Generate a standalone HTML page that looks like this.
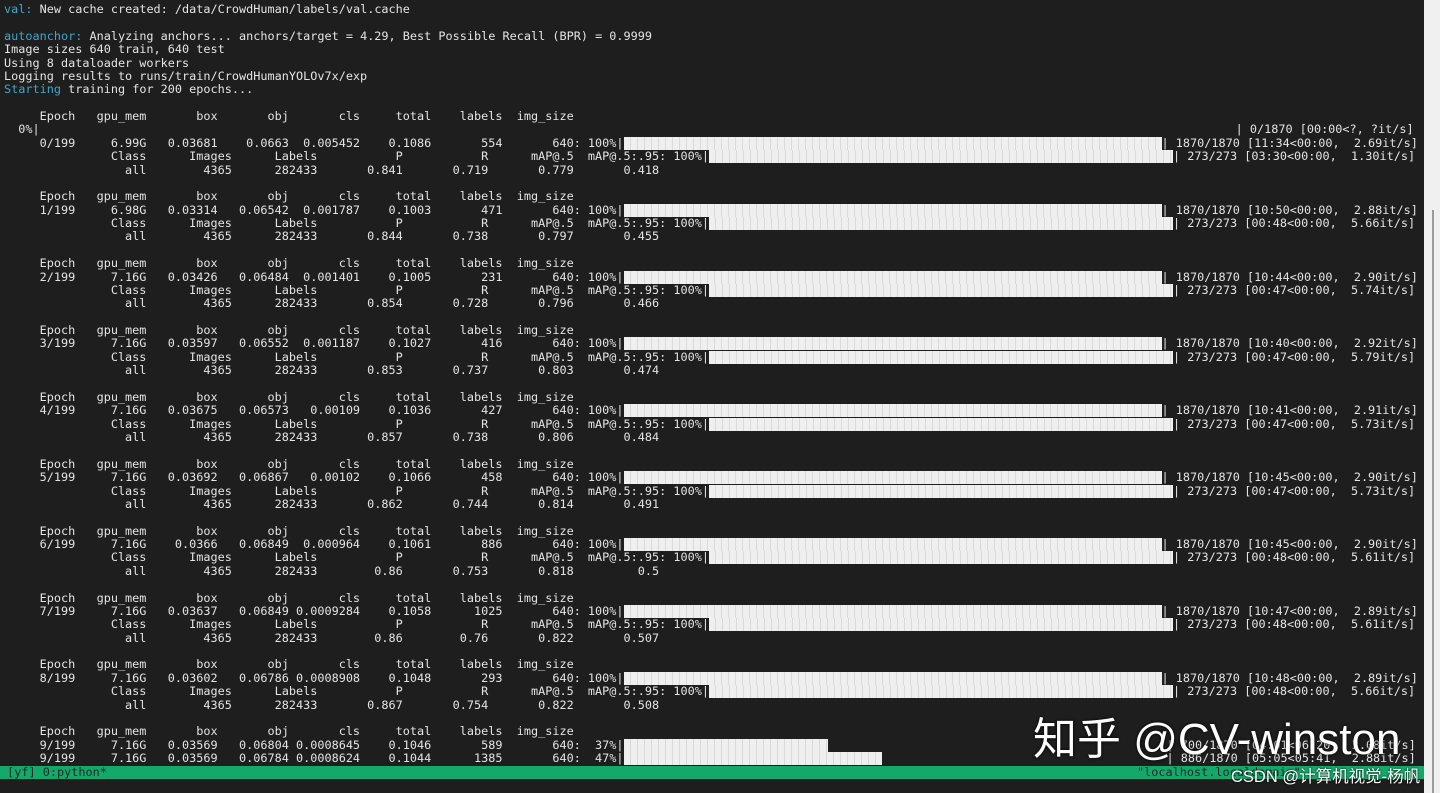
<!DOCTYPE html>
<html><head><meta charset="utf-8"><style>
html,body{margin:0;padding:0;width:1440px;height:793px;overflow:hidden;background:#1e1e1e;}
pre{position:absolute;left:4px;top:3px;margin:0;font-family:"DejaVu Sans Mono","Liberation Mono",monospace;font-size:11.83px;line-height:13.37px;color:#e4e4e4;white-space:pre;}
.c{color:#3ea6cc}
.b,.v,.p,.s{display:inline-block;height:13px;vertical-align:top;}
.b,.v,.p{background:#efefef repeating-linear-gradient(90deg,#efefef 0,#efefef 6px,#dadada 6px,#dadada 7px);}
.b{width:538px}.v{width:464px}
.sb{position:absolute;left:1424px;top:0;width:16px;height:793px;background:#f0f0f0;}
.th{position:absolute;left:1432px;top:210px;width:2px;height:583px;background:#9a9a9a;}
.st{position:absolute;left:0;top:766px;width:1424px;height:13px;background:#14a96b;font-family:"DejaVu Sans Mono","Liberation Mono",monospace;font-size:11.83px;line-height:13px;color:#1e2a22;white-space:pre;}
.wm{position:absolute;left:1033px;top:703px;font-family:"Liberation Sans","Noto Sans CJK SC",sans-serif;font-size:44px;color:#fff;text-shadow:0 0 3px #000;white-space:nowrap;}
.cs{position:absolute;left:1231px;top:763px;font-family:"Liberation Sans","Noto Sans CJK SC",sans-serif;font-size:16.5px;color:#fff;text-shadow:0 0 2px #000;white-space:nowrap;}
</style></head><body>
<pre><span class="c">val:</span> New cache created: /data/CrowdHuman/labels/val.cache

<span class="c">autoanchor:</span> Analyzing anchors... anchors/target = 4.29, Best Possible Recall (BPR) = 0.9999
Image sizes 640 train, 640 test
Using 8 dataloader workers
Logging results to runs/train/CrowdHumanYOLOv7x/exp
<span class="c">Starting</span> training for 200 epochs...

     Epoch   gpu_mem       box       obj       cls     total    labels  img_size
  0%|<span class="s" style="width:1196px"></span>| 0/1870 [00:00&lt;?, ?it/s]
     0/199     6.99G   0.03681    0.0663  0.005452    0.1086       554       640: 100%|<span class="b"></span>| 1870/1870 [11:34&lt;00:00,  2.69it/s]
               Class      Images      Labels           P           R      mAP@.5  mAP@.5:.95: 100%|<span class="v"></span>| 273/273 [03:30&lt;00:00,  1.30it/s]
                 all        4365      282433       0.841       0.719       0.779       0.418

     Epoch   gpu_mem       box       obj       cls     total    labels  img_size
     1/199     6.98G   0.03314   0.06542  0.001787    0.1003       471       640: 100%|<span class="b"></span>| 1870/1870 [10:50&lt;00:00,  2.88it/s]
               Class      Images      Labels           P           R      mAP@.5  mAP@.5:.95: 100%|<span class="v"></span>| 273/273 [00:48&lt;00:00,  5.66it/s]
                 all        4365      282433       0.844       0.738       0.797       0.455

     Epoch   gpu_mem       box       obj       cls     total    labels  img_size
     2/199     7.16G   0.03426   0.06484  0.001401    0.1005       231       640: 100%|<span class="b"></span>| 1870/1870 [10:44&lt;00:00,  2.90it/s]
               Class      Images      Labels           P           R      mAP@.5  mAP@.5:.95: 100%|<span class="v"></span>| 273/273 [00:47&lt;00:00,  5.74it/s]
                 all        4365      282433       0.854       0.728       0.796       0.466

     Epoch   gpu_mem       box       obj       cls     total    labels  img_size
     3/199     7.16G   0.03597   0.06552  0.001187    0.1027       416       640: 100%|<span class="b"></span>| 1870/1870 [10:40&lt;00:00,  2.92it/s]
               Class      Images      Labels           P           R      mAP@.5  mAP@.5:.95: 100%|<span class="v"></span>| 273/273 [00:47&lt;00:00,  5.79it/s]
                 all        4365      282433       0.853       0.737       0.803       0.474

     Epoch   gpu_mem       box       obj       cls     total    labels  img_size
     4/199     7.16G   0.03675   0.06573   0.00109    0.1036       427       640: 100%|<span class="b"></span>| 1870/1870 [10:41&lt;00:00,  2.91it/s]
               Class      Images      Labels           P           R      mAP@.5  mAP@.5:.95: 100%|<span class="v"></span>| 273/273 [00:47&lt;00:00,  5.73it/s]
                 all        4365      282433       0.857       0.738       0.806       0.484

     Epoch   gpu_mem       box       obj       cls     total    labels  img_size
     5/199     7.16G   0.03692   0.06867   0.00102    0.1066       458       640: 100%|<span class="b"></span>| 1870/1870 [10:45&lt;00:00,  2.90it/s]
               Class      Images      Labels           P           R      mAP@.5  mAP@.5:.95: 100%|<span class="v"></span>| 273/273 [00:47&lt;00:00,  5.73it/s]
                 all        4365      282433       0.862       0.744       0.814       0.491

     Epoch   gpu_mem       box       obj       cls     total    labels  img_size
     6/199     7.16G    0.0366   0.06849  0.000964    0.1061       886       640: 100%|<span class="b"></span>| 1870/1870 [10:45&lt;00:00,  2.90it/s]
               Class      Images      Labels           P           R      mAP@.5  mAP@.5:.95: 100%|<span class="v"></span>| 273/273 [00:48&lt;00:00,  5.61it/s]
                 all        4365      282433        0.86       0.753       0.818         0.5

     Epoch   gpu_mem       box       obj       cls     total    labels  img_size
     7/199     7.16G   0.03637   0.06849 0.0009284    0.1058      1025       640: 100%|<span class="b"></span>| 1870/1870 [10:47&lt;00:00,  2.89it/s]
               Class      Images      Labels           P           R      mAP@.5  mAP@.5:.95: 100%|<span class="v"></span>| 273/273 [00:48&lt;00:00,  5.61it/s]
                 all        4365      282433        0.86        0.76       0.822       0.507

     Epoch   gpu_mem       box       obj       cls     total    labels  img_size
     8/199     7.16G   0.03602   0.06786 0.0008908    0.1048       293       640: 100%|<span class="b"></span>| 1870/1870 [10:48&lt;00:00,  2.89it/s]
               Class      Images      Labels           P           R      mAP@.5  mAP@.5:.95: 100%|<span class="v"></span>| 273/273 [00:48&lt;00:00,  5.66it/s]
                 all        4365      282433       0.867       0.754       0.822       0.508

     Epoch   gpu_mem       box       obj       cls     total    labels  img_size
     9/199     7.16G   0.03569   0.06804 0.0008645    0.1046       589       640:  37%|<span class="p" style="width:204px"></span><span class="s" style="width:339px"></span>| 700/1870 [04:01&lt;06:20,  3.08it/s]
     9/199     7.16G   0.03569   0.06784 0.0008624    0.1044      1385       640:  47%|<span class="p" style="width:258px"></span><span class="s" style="width:285px"></span>| 886/1870 [05:05&lt;05:41,  2.88it/s]</pre>
<div class="st"> [yf] 0:python*<span style="position:absolute;left:1137px">"localhost.localdomain"</span></div>
<div class="sb"></div><div class="th"></div>
<div class="wm">知乎 @CV-winston</div>
<div class="cs">CSDN @计算机视觉-杨帆</div>
</body></html>
